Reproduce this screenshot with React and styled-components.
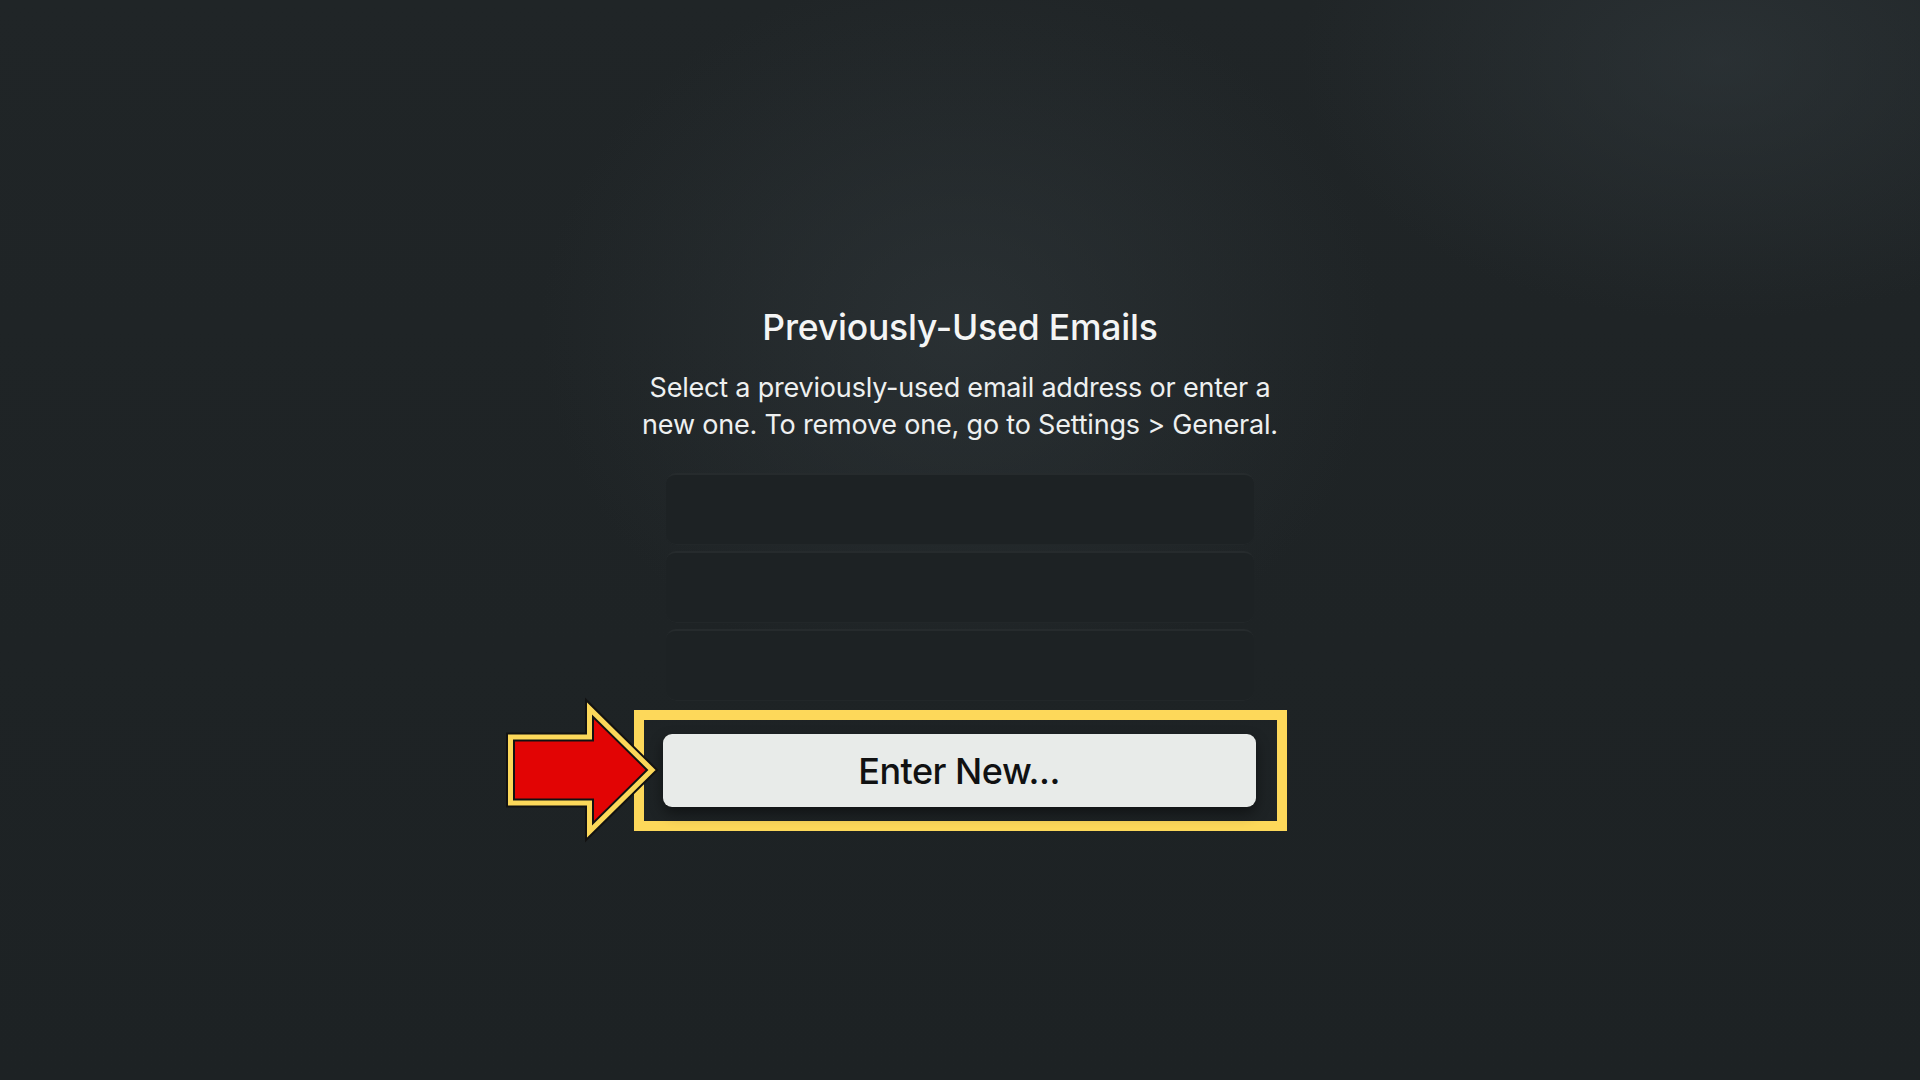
import styled, { createGlobalStyle } from "styled-components";

const GlobalStyle = createGlobalStyle`
  html, body {
    margin: 0;
    padding: 0;
    background: #1e2325;
  }
  body {
    font-family: Inter, "Open Sans", "Liberation Sans", sans-serif;
    -webkit-font-smoothing: antialiased;
  }
`;

const Screen = styled.main`
  width: 1920px;
  height: 1080px;
  overflow: hidden;
  display: flex;
  flex-direction: column;
  align-items: center;
  padding-top: 305px;
  box-sizing: border-box;
  background:
    radial-gradient(ellipse 420px 360px at 960px 330px, rgba(52, 60, 64, 0.5), rgba(52, 60, 64, 0) 100%),
    radial-gradient(ellipse 420px 260px at 1720px 60px, rgba(50, 58, 62, 0.55), rgba(50, 58, 62, 0) 100%),
    linear-gradient(180deg, #202527 0%, #1e2325 60%, #1d2224 100%);
`;

const Title = styled.h1`
  margin: 0;
  font-size: 35.5px;
  line-height: 46px;
  font-weight: 500;
  color: #f4f5f5;
  letter-spacing: -0.2px;
`;

const Description = styled.p`
  margin: 18px 0 0;
  width: 650px;
  text-align: center;
  font-size: 27px;
  line-height: 37px;
  font-weight: 400;
  color: #eef0f0;
  letter-spacing: -0.2px;
`;

const List = styled.div`
  margin-top: 30px;
  width: 588px;
  display: flex;
  flex-direction: column;
  gap: 6px;
`;

const EmptyRow = styled.div`
  height: 70px;
  border-radius: 10px;
  background: #1d2224;
  border-top: 2px solid rgba(255, 255, 255, 0.045);
  box-shadow: inset 0 -1px 0 rgba(255, 255, 255, 0.025);
`;

const Highlight = styled.div`
  position: relative;
  margin-top: 9px;
  width: 653px;
  box-sizing: border-box;
  border: 10px solid #fdd85a;
  padding: 14px 21px 14px 19px;
`;

const EnterButton = styled.button`
  display: block;
  width: 100%;
  height: 73px;
  border: none;
  border-radius: 9px;
  background: #e8ebe9;
  color: #101112;
  font-family: inherit;
  font-size: 36px;
  font-weight: 500;
  letter-spacing: -0.5px;
  box-shadow: 0 6px 14px rgba(0, 0, 0, 0.45);
  cursor: pointer;
`;

const Pointer = styled.svg`
  position: absolute;
  left: -139px;
  top: -23px;
  width: 156px;
  height: 148px;
`;

const Arrow = () => (
  <Pointer viewBox="0 0 156 148">
    <polygon
      points="2,36.5 81,36.5 81,3 152,73 81,143 81,109.5 2,109.5"
      fill="#fcd85a"
      stroke="#121212"
      strokeWidth="2"
    />
    <polygon
      points="9,43.5 88,43.5 88,19.8 142,73 88,126.2 88,102.5 9,102.5"
      fill="#e20404"
      stroke="#121212"
      strokeWidth="2"
    />
  </Pointer>
);

export default function App() {
  return (
    <>
      <GlobalStyle />
      <Screen>
        <Title>Previously-Used Emails</Title>
        <Description>
          Select a previously-used email address or enter a new one. To remove
          one, go to Settings &gt; General.
        </Description>
        <List>
          <EmptyRow />
          <EmptyRow />
          <EmptyRow />
        </List>
        <Highlight>
          <Arrow />
          <EnterButton>Enter New...</EnterButton>
        </Highlight>
      </Screen>
    </>
  );
}
